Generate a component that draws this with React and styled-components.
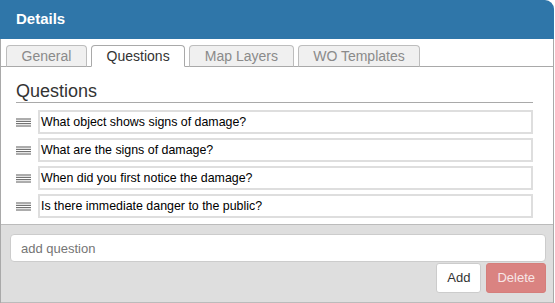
import React from 'react'
import styled, { createGlobalStyle } from 'styled-components'

const tabs = ['General', 'Questions', 'Map Layers', 'WO Templates']

const questions = [
  'What object shows signs of damage?',
  'What are the signs of damage?',
  'When did you first notice the damage?',
  'Is there immediate danger to the public?',
]

const Handle = () => (
  <HandleIcon width="15" height="9" viewBox="0 0 15 9">
    <path d="M0 1h15M0 3.33h15M0 5.67h15M0 8h15" stroke="#5a5a5a" strokeWidth="1" />
  </HandleIcon>
)

const App = () => {
  return (
    <Panel>
      <GlobalStyle />
      <Header>Details</Header>
      <Frame>
        <Body>
          <TabBar>
            {tabs.map((t) => (
              <Tab key={t} active={t === 'Questions'}>{t}</Tab>
            ))}
          </TabBar>
          <Content>
            <Heading>Questions</Heading>
            <List>
              {questions.map((q) => (
                <Row key={q}>
                  <Handle />
                  <QuestionBox>{q}</QuestionBox>
                </Row>
              ))}
            </List>
          </Content>
        </Body>
        <Footer>
          <AddInput placeholder="add question" />
          <Buttons>
            <Button>Add</Button>
            <Button danger>Delete</Button>
          </Buttons>
        </Footer>
      </Frame>
    </Panel>
  )
}

export default App

const GlobalStyle = createGlobalStyle`
  body {
    margin: 0;
    background: #fff;
    font-family: 'Liberation Sans', Arial, sans-serif;
  }
  * { box-sizing: border-box; }
`
const Panel = styled.div`
  width: 554px;
  height: 303px;
  display: flex;
  flex-direction: column;
`
const Header = styled.div`
  height: 39px;
  flex-shrink: 0;
  background: #2f76a9;
  border-top-right-radius: 9px;
  color: #fff;
  font-size: 15px;
  font-weight: bold;
  line-height: 38px;
  padding-left: 16px;
`
const Frame = styled.div`
  flex: 1;
  display: flex;
  flex-direction: column;
  border-left: 1px solid #a9a9a9;
  border-right: 1px solid #a9a9a9;
`
const Body = styled.div`
  background: #fff;
  padding-top: 6px;
`
const TabBar = styled.div`
  display: flex;
  gap: 4px;
  padding-left: 5px;
  height: 22px;
  border-bottom: 1px solid #a9a9a9;
`
const Tab = styled.div`
  height: 22px;
  padding: 0 14.6px;
  border: 1px solid ${(p) => (p.active ? '#a9a9a9' : '#bdbdbd')};
  border-bottom-color: ${(p) => (p.active ? '#fff' : '#a9a9a9')};
  border-radius: 4px 4px 0 0;
  background: ${(p) => (p.active ? '#fff' : '#f0f0f0')};
  color: ${(p) => (p.active ? '#333' : '#8a8a8a')};
  font-size: 14px;
  line-height: 20px;
`
const Content = styled.div`
  padding: 13px 20px 6px 15px;
`
const Heading = styled.div`
  font-size: 18px;
  line-height: 22px;
  color: #333;
  border-bottom: 1px solid #a9a9a9;
`
const List = styled.div`
  display: flex;
  flex-direction: column;
  gap: 4px;
  margin-top: 7px;
`
const Row = styled.div`
  display: flex;
  align-items: center;
  gap: 7px;
`
const HandleIcon = styled.svg`
  flex-shrink: 0;
  display: block;
`
const QuestionBox = styled.div`
  flex: 1;
  height: 24px;
  border: 2px solid #dedede;
  padding: 0 1px;
  font-size: 12.4px;
  line-height: 20px;
  color: #000;
`
const Footer = styled.div`
  flex: 1;
  display: flex;
  flex-direction: column;
  background: #dedede;
  border-top: 1px solid #bbb;
  border-bottom: 1px solid #bbb;
  padding: 9px 7px 0 9px;
`
const AddInput = styled.input`
  height: 28px;
  width: 100%;
  border: 1px solid #ccc;
  border-radius: 4px;
  padding: 0 10px;
  font-family: 'Liberation Sans', Arial, sans-serif;
  font-size: 13px;
  color: #333;
  outline: none;
  ::placeholder {
    color: #999;
  }
`
const Buttons = styled.div`
  display: flex;
  justify-content: flex-end;
  gap: 5px;
  margin-top: 1px;
`
const Button = styled.button`
  height: 30px;
  padding: 0 10px;
  border-radius: 3px;
  border: 1px solid ${(p) => (p.danger ? '#d57e7b' : '#ccc')};
  background: ${(p) => (p.danger ? '#da8381' : '#fff')};
  color: ${(p) => (p.danger ? '#f7e6e6' : '#333')};
  font-family: 'Liberation Sans', Arial, sans-serif;
  font-size: 13px;
  line-height: 18px;
`
